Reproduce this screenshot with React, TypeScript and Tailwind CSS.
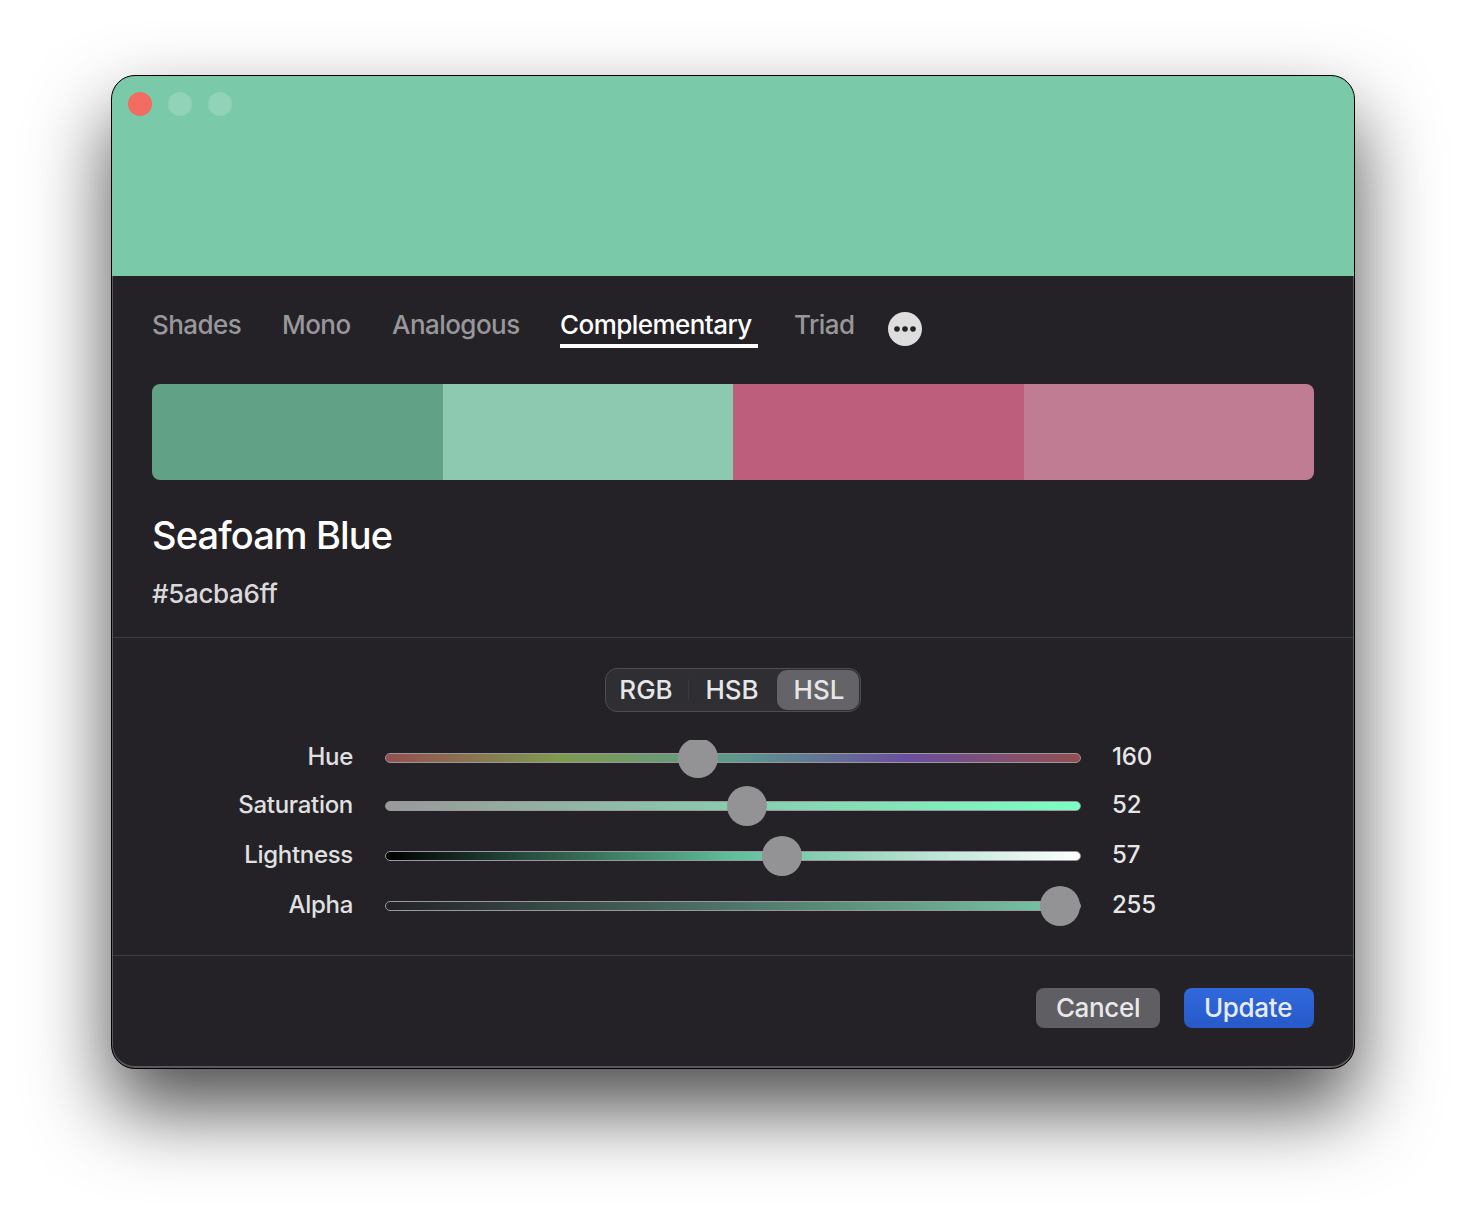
const tabs = [
  { name: "Shades", width: "w-[89px]", gap: "mr-[41px]" },
  { name: "Mono", width: "w-[68px]", gap: "mr-[42px]" },
  { name: "Analogous", width: "w-[127px]", gap: "mr-[41px]" },
]

const sliders = [
  {
    label: "Hue",
    value: "160",
    rowClass: "mt-[28px] h-[38px] overflow-hidden",
    textPad: "pb-[4px]",
    track: "top-[13px] bg-[linear-gradient(90deg,#934f50_0%,#7f9a4e_25%,#5c9a8c_50%,#6a4f9f_75%,#934f50_100%)]",
    thumb: "left-[293px] top-[-2px]",
  },
  {
    label: "Saturation",
    value: "52",
    rowClass: "mt-[8px] h-[40px]",
    textPad: "pb-[2px]",
    track: "top-[15px] bg-[linear-gradient(90deg,#999999_0%,#7bffc4_100%)]",
    thumb: "left-[342px] top-0",
  },
  {
    label: "Lightness",
    value: "57",
    rowClass: "mt-[10px] h-[40px]",
    textPad: "pb-[2px]",
    track: "top-[15px] bg-[linear-gradient(90deg,#000000_0%,#5fbf9c_50%,#ffffff_100%)]",
    thumb: "left-[377px] top-0",
  },
  {
    label: "Alpha",
    value: "255",
    rowClass: "mt-[10px] h-[40px]",
    textPad: "pb-[2px]",
    track: "top-[15px] bg-[linear-gradient(90deg,#232227_0%,#7ac9a9_100%)]",
    thumb: "left-[655px] top-0",
  },
]

function App() {
  return (
    <div className="h-[1216px] bg-white pl-[111px] pt-[75px] font-['Inter',sans-serif] font-[450]">
      <div className="flex h-[994px] w-[1244px] flex-col overflow-hidden rounded-[24px] border border-black bg-[#242227] shadow-[0_40px_80px_0_rgba(0,0,0,0.7)]">
        <div className="flex h-[200px] shrink-0 gap-4 bg-[#7ac9a9] pl-[16px] pt-[16px]">
          <div className="h-6 w-6 rounded-full bg-[#f26d60]"></div>
          <div className="h-6 w-6 rounded-full bg-[#90d3b8]"></div>
          <div className="h-6 w-6 rounded-full bg-[#90d3b8]"></div>
        </div>

        <div className="flex flex-1 flex-col rounded-b-[23px] border-x border-b-2 border-[#5a595d]">
          <div className="flex h-[108px] flex-col px-[39px]">
            <div className="flex h-[72px] items-start pt-[30px]">
              {tabs.map((tab) => (
                <div key={tab.name} className={`${tab.width} ${tab.gap} text-[26px] leading-[38px] tracking-[-0.55px] text-[#98979a]`}>
                  {tab.name}
                </div>
              ))}
              <div className="mr-[36px] h-[42px] w-[198px] border-b-4 border-white text-[26px] leading-[38px] tracking-[-0.55px] whitespace-nowrap text-white">
                Complementary
              </div>
              <div className="mr-[34px] w-[60px] text-[26px] leading-[38px] tracking-[-0.55px] text-[#98979a]">Triad</div>
              <svg className="mt-[6px]" width="34" height="34" viewBox="0 0 34 34">
                <circle cx="17" cy="17" r="17" fill="#dedede" />
                <circle cx="9" cy="17" r="2.8" fill="#222226" />
                <circle cx="17" cy="17" r="2.8" fill="#222226" />
                <circle cx="25" cy="17" r="2.8" fill="#222226" />
              </svg>
            </div>
            <div className="mt-[36px] flex h-[96px] shrink-0 overflow-hidden rounded-[8px]">
              <div className="flex-1 bg-[#61a186]"></div>
              <div className="flex-1 bg-[#8dc9b1]"></div>
              <div className="flex-1 bg-[#bd5f7c]"></div>
              <div className="flex-1 bg-[#c07c93]"></div>
            </div>
          </div>

          <div className="mt-[96px] flex h-[158px] flex-col border-b border-[#3e3d41] px-[39px] pt-[31px]">
            <div className="text-[38px] leading-[48px] tracking-[-0.88px] text-white">Seafoam Blue</div>
            <div className="mt-[17px] text-[26px] leading-[36px] tracking-[-0.35px] text-[#d9d9da]">#5acba6ff</div>
          </div>

          <div className="flex h-[318px] flex-col items-center border-b border-[#3e3d41] pt-[30px]">
            <div className="flex h-[44px] w-[256px] items-center rounded-[12px] border border-[#4d4c50] bg-[#2f2e33] p-[1px] text-[26px] text-[#e6e6e7]">
              <div className="mr-[3px] flex w-[78px] justify-center pb-[2px]">RGB</div>
              <div className="h-[22px] w-px bg-[#39383c]"></div>
              <div className="flex w-[86px] justify-center pb-[2px]">HSB</div>
              <div className="ml-[2px] flex h-[40px] flex-1 items-center justify-center rounded-[10px] bg-[#646367] pb-[2px] pl-[2px]">HSL</div>
            </div>

            <div className="flex w-full flex-col">
              {sliders.map((s) => (
                <div key={s.label} className={`flex items-center pl-[39px] ${s.rowClass}`}>
                  <div className={`w-[201px] text-right text-[24px] tracking-[-0.3px] text-[#e0e0e1] ${s.textPad}`}>{s.label}</div>
                  <div className="relative ml-[32px] h-[40px] w-[696px] self-start">
                    <div className={`absolute h-[10px] w-full rounded-full border border-[#99989b] ${s.track}`}></div>
                    <div className={`absolute h-[40px] w-[40px] rounded-full bg-[#939395] ${s.thumb}`}></div>
                  </div>
                  <div className={`ml-[31px] text-[24px] tracking-[-0.2px] text-[#e6e6e7] ${s.textPad}`}>{s.value}</div>
                </div>
              ))}
            </div>
          </div>

          <div className="flex justify-end gap-6 px-[39px] pt-[32px]">
            <div className="flex h-[40px] w-[124px] items-center justify-center rounded-[8px] bg-[#5f5e62] pb-[2px] text-[26px] tracking-[-0.35px] text-[#e8e8e9]">
              Cancel
            </div>
            <div className="flex h-[40px] w-[130px] items-center justify-center rounded-[8px] bg-[linear-gradient(180deg,#3069dc_0%,#2759c8_100%)] pr-[2px] pb-[2px] text-[26px] tracking-[-0.3px] text-[#e6ecfa]">
              Update
            </div>
          </div>
        </div>
      </div>
    </div>
  )
}

export default App
